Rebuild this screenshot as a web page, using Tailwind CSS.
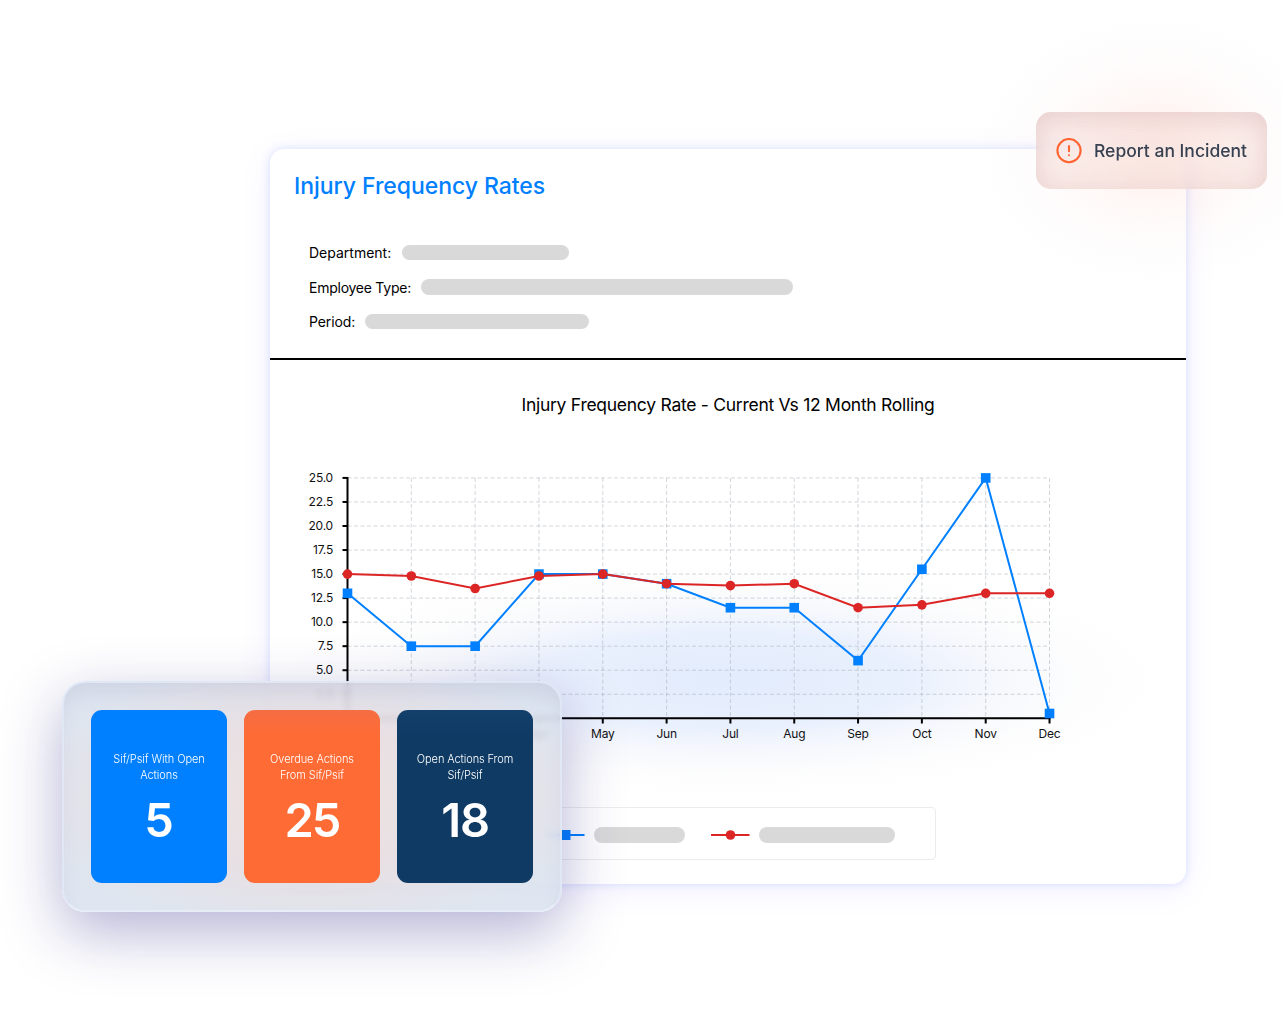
<!DOCTYPE html>
<html lang="en">
<head>
  <meta charset="UTF-8" />
  <meta name="viewport" content="width=device-width, initial-scale=1.0" />
  <title>Injury Frequency Rates</title>
  <script src="https://cdn.jsdelivr.net/npm/@tailwindcss/browser@4"></script>
</head>

<body class="bg-white text-black font-['Inter',sans-serif]">
  <div class="relative w-[1281px] h-[1024px] overflow-hidden pt-[149px] pl-[270px]">

    <!-- Report card -->
    <main class="w-[916px] h-[735px] rounded-[14px] bg-white shadow-[0_0_8px_rgba(80,130,255,0.22),0_6px_32px_rgba(120,80,255,0.09)]">
      <header class="h-[211px] border-b-2 border-black pl-6 pt-[21px]">
        <h1 class="text-[23px] leading-8 font-medium tracking-[-0.05px] text-[#0080ff]">Injury Frequency Rates</h1>
        <div class="pl-[15px] pt-[33px] flex flex-col text-[14px]">
          <div class="flex items-center h-[34.7px]">
            <span class="w-[92.5px]">Department:</span>
            <span class="w-[167.5px] h-[15.5px] rounded-full bg-[#d9d9d9]"></span>
          </div>
          <div class="flex items-center h-[34.7px]">
            <span class="w-[111.5px] tracking-[-0.25px]">Employee Type:</span>
            <span class="w-[372px] h-[15.5px] rounded-full bg-[#d9d9d9]"></span>
          </div>
          <div class="flex items-center h-[34.7px]">
            <span class="w-[56px] tracking-[-0.1px]">Period:</span>
            <span class="w-[224px] h-[15.5px] rounded-full bg-[#d9d9d9]"></span>
          </div>
        </div>
      </header>

      <section class="flex flex-col items-center">
        <h2 class="mt-[31px] text-[17.5px] leading-7 h-7 tracking-[-0.27px]">Injury Frequency Rate - Current Vs 12 Month Rolling</h2>
        <svg id="chart" class="w-[916px] h-[340px] block overflow-visible" viewBox="270 419 916 340">
          <defs>
            <radialGradient id="haze">
              <stop offset="0" stop-color="#3f7df0" stop-opacity="0.15" />
              <stop offset="0.4" stop-color="#3f7df0" stop-opacity="0.115" />
              <stop offset="0.6" stop-color="#5a84dc" stop-opacity="0.06" />
              <stop offset="0.8" stop-color="#8090b0" stop-opacity="0.018" />
              <stop offset="1" stop-color="#8090b0" stop-opacity="0" />
            </radialGradient>
          </defs>
          <ellipse cx="728" cy="680" rx="445" ry="118" fill="url(#haze)" />
          <g id="grid" stroke="#9ca3af" stroke-opacity="0.45" stroke-width="1" stroke-dasharray="4 2.5"></g>
          <g id="axes" stroke="#000" stroke-width="2"></g>
          <g id="labels" class="text-[12px] tracking-[-0.2px]" fill="#111"></g>
          <g id="series" stroke-width="2" fill="none"></g>
        </svg>
        <div class="mt-[48px] w-[416px] h-[53px] rounded border border-[#ececec] flex items-center pt-0.5 pl-[25px]">
          <svg class="w-[39px] h-3" viewBox="0 0 39 12"><path d="M0 6h38.5" stroke="#0080ff" stroke-width="2" /><path d="M14.5 1h10v10h-10z" fill="#0080ff" /></svg>
          <span class="ml-[9px] w-[91px] h-4 rounded-full bg-[#d9d9d9]"></span>
          <svg class="ml-[26px] w-[39px] h-3" viewBox="0 0 39 12"><path d="M0 6h38.5" stroke="#dc2626" stroke-width="2" /><circle cx="19.5" cy="6" r="4.8" fill="#dc2626" /></svg>
          <span class="ml-[9px] w-[136px] h-4 rounded-full bg-[#d9d9d9]"></span>
        </div>
      </section>
    </main>

    <!-- Glow behind the incident button -->
    <div class="absolute left-[970px] top-[10px] w-[370px] h-[280px] bg-[radial-gradient(closest-side,rgba(255,120,80,0.13),rgba(255,120,80,0.06)_35%,rgba(200,130,110,0.02)_65%,transparent)]"></div>

    <button class="absolute left-[1036px] top-[112px] w-[231px] h-[77px] rounded-[15px] flex items-center pl-5 text-[#374151] backdrop-blur-[6px] bg-[#f8dfda]/50 shadow-[inset_0_0_32px_rgba(195,135,135,0.22),inset_0_10px_20px_rgba(180,130,140,0.12)]">
      <svg class="w-[26px] h-[26px] shrink-0" viewBox="0 0 26 26" fill="none" stroke="#ff6432" stroke-width="2.1" stroke-linecap="round">
        <circle cx="13" cy="12.6" r="11.6" />
        <path d="M13 8v5.2M13 17.2v.1" />
      </svg>
      <span class="ml-3 pt-[2px] text-[17.5px] font-medium whitespace-nowrap">Report an Incident</span>
    </button>

    <!-- Action counters -->
    <div class="absolute left-[62px] top-[681px] w-[500px] h-[231px] rounded-[23px] shadow-[0_20px_60px_rgba(40,38,135,0.35)]"></div>
    <section class="absolute left-[62px] top-[681px] w-[500px] h-[231px] rounded-[23px] overflow-hidden border-2 border-[#e0ebf8]/50 border-b-[#eaf0fa]/80 px-[27px] pt-[27px] flex items-start gap-[17px] text-white text-center backdrop-blur-[3px] bg-[radial-gradient(ellipse_at_center,rgba(234,222,222,0.87)_0%,rgba(228,219,223,0.87)_45%,rgba(217,226,238,0.87)_85%)] shadow-[inset_0_16px_22px_-6px_rgba(100,80,130,0.12)]">
      <div class="w-[136px] h-[173px] shrink-0 rounded-[11px] bg-[#0080ff] pt-[42px]">
        <p class="text-[11px] leading-[15.5px] font-light tracking-[-0.08px]">Sif/Psif With Open<br />Actions</p>
        <p class="mt-[7px] text-[47px] leading-[60px] font-semibold">5</p>
      </div>
      <div class="w-[136px] h-[173px] shrink-0 rounded-[11px] bg-linear-to-b from-[#f56d42] to-[#ff6b35] to-15% pt-[42px]">
        <p class="text-[11px] leading-[15.5px] font-light tracking-[-0.08px]">Overdue Actions<br />From Sif/Psif</p>
        <p class="mt-[7px] text-[47px] leading-[60px] font-semibold tracking-[-1.8px]">25</p>
      </div>
      <div class="w-[136px] h-[173px] shrink-0 rounded-[11px] bg-linear-to-b from-[#123f6b] to-[#0f3a64] to-15% pt-[42px]">
        <p class="text-[11px] leading-[15.5px] font-light tracking-[-0.1px]">Open Actions From<br />Sif/Psif</p>
        <p class="mt-[7px] text-[47px] leading-[60px] font-semibold tracking-[-1.2px]">18</p>
      </div>
    </section>
  </div>

  <script>
    const months = ['Jan', 'Feb', 'Mar', 'Apr', 'May', 'Jun', 'Jul', 'Aug', 'Sep', 'Oct', 'Nov', 'Dec'];
    const current = [13, 7.5, 7.5, 15, 15, 14, 11.5, 11.5, 6, 15.5, 25, 0.5];
    const rolling = [15, 14.8, 13.5, 14.8, 15, 14, 13.8, 14, 11.5, 11.8, 13, 13];
    const x = i => 347.5 + i * 63.82;
    const y = v => 718.3 - v * 9.615;

    let grid = '', axes = '', labels = '';
    for (let v = 0; v <= 25; v += 2.5) {
      if (v > 0) grid += `<path d="M347.5 ${y(v)}H1049.5"/>`;
      axes += `<path d="M342.5 ${y(v)}h5"/>`;
      labels += `<text x="333" y="${y(v) + 4.2}" text-anchor="end">${v.toFixed(1)}</text>`;
    }
    months.forEach((m, i) => {
      if (i > 0) grid += `<path d="M${x(i)} 478V718"/>`;
      axes += `<path d="M${x(i)} 718v5.5"/>`;
      labels += `<text x="${x(i)}" y="738" text-anchor="middle">${m}</text>`;
    });
    axes += '<path d="M347.5 477V718.3H1050.5" fill="none"/>';

    const line = (data, color) =>
      `<polyline stroke="${color}" points="${data.map((v, i) => x(i) + ',' + y(v)).join(' ')}"/>`;
    let series = line(current, '#0080ff');
    current.forEach((v, i) => series += `<rect x="${x(i) - 4.8}" y="${y(v) - 4.8}" width="9.6" height="9.6" fill="#0080ff"/>`);
    series += line(rolling, '#dc2626');
    rolling.forEach((v, i) => series += `<circle cx="${x(i)}" cy="${y(v)}" r="4.8" fill="#dc2626"/>`);

    document.getElementById('grid').innerHTML = grid;
    document.getElementById('axes').innerHTML = axes;
    document.getElementById('labels').innerHTML = labels;
    document.getElementById('series').innerHTML = series;
  </script>
</body>
</html>
